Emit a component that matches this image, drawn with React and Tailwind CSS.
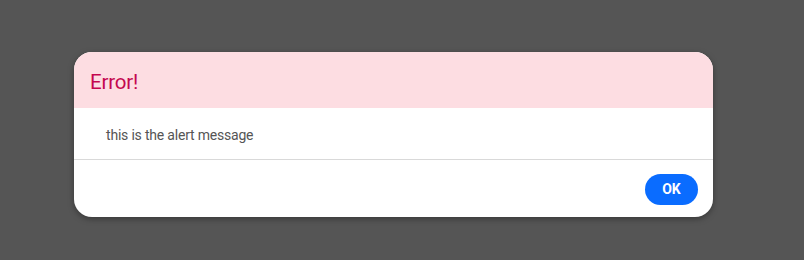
import React from 'react';

const App = () => {
  return (
    <div className="w-[804px] h-[260px] bg-[#555555] pt-[52px] pl-[74px]" style={{ fontFamily: 'Roboto, "Liberation Sans", sans-serif' }}>
      {/* DIALOG */}
      <div className="w-[639px] h-[165px] bg-white rounded-[18px] overflow-hidden flex flex-col shadow-[0_2px_6px_rgba(0,0,0,0.35)]">
        <div className="h-[56px] bg-[#fddde2] flex items-center pl-4 pt-[4px]">
          <h2 className="text-[20.5px] text-[#c4074f] tracking-[-0.2px]">Error!</h2>
        </div>
        <div className="h-[52px] flex items-center pl-8 pt-[3px] border-b-[1.5px] border-[#d9d9d9]">
          <p className="text-[14px] text-[#555555] tracking-[-0.2px]">this is the alert message</p>
        </div>
        <div className="flex-1 flex items-center justify-end pr-[15px] pt-[1px]">
          <button className="w-[53px] h-[31px] rounded-full bg-[#0a6cff] text-white text-[14px] font-bold">
            OK
          </button>
        </div>
      </div>
    </div>
  );
};

export default App;
